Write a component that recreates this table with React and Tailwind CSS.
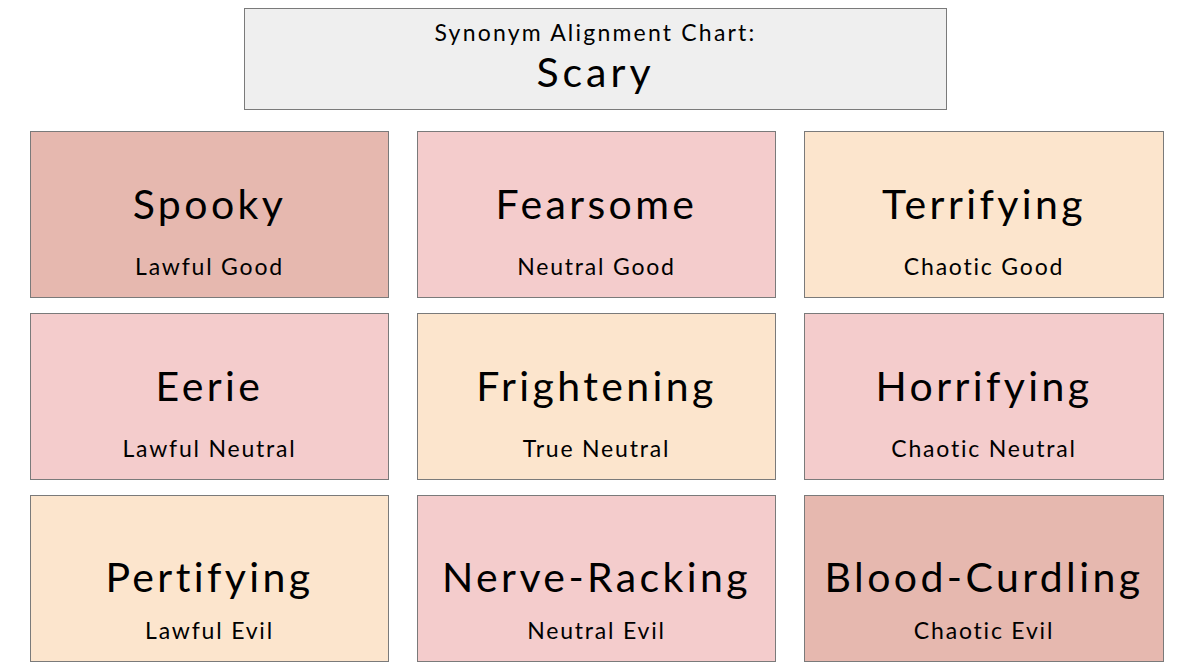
import React from 'react'

const cards = [
  { word: 'Spooky', label: 'Lawful Good', bg: 'bg-[#e6b8af]', row: 1 },
  { word: 'Fearsome', label: 'Neutral Good', bg: 'bg-[#f4cccc]', row: 1 },
  { word: 'Terrifying', label: 'Chaotic Good', bg: 'bg-[#fce5cd]', row: 1 },
  { word: 'Eerie', label: 'Lawful Neutral', bg: 'bg-[#f4cccc]', row: 2 },
  { word: 'Frightening', label: 'True Neutral', bg: 'bg-[#fce5cd]', row: 2 },
  { word: 'Horrifying', label: 'Chaotic Neutral', bg: 'bg-[#f4cccc]', row: 2 },
  { word: 'Pertifying', label: 'Lawful Evil', bg: 'bg-[#fce5cd]', row: 3 },
  { word: 'Nerve-Racking', label: 'Neutral Evil', bg: 'bg-[#f4cccc]', row: 3 },
  { word: 'Blood-Curdling', label: 'Chaotic Evil', bg: 'bg-[#e6b8af]', row: 3 },
]

const App = () => {
  return (
    <div className="w-[1191px] h-[671px] bg-white font-['Lato','Noto_Sans',sans-serif] text-black overflow-hidden">
      {/* header */}
      <div className="pt-2 flex justify-center">
        <div className="w-[703px] h-[102px] bg-[#efefef] border border-[#7a7a7a] flex flex-col items-center pt-[8px]">
          <p className="text-[23px] leading-[30px] tracking-[2.2px]">Synonym Alignment Chart:</p>
          <p className="text-[41px] leading-[50px] tracking-[4px]">Scary</p>
        </div>
      </div>

      {/* grid */}
      <div className="grid grid-cols-[359px_359px_360px] gap-x-[28px] gap-y-[15px] px-[30px] mt-[21px]">
        {cards.map((c) => (
          <div
            key={c.word}
            className={`${c.bg} h-[167px] border border-[#7a7a7a] flex flex-col items-center justify-end pb-[16px]`}
          >
            <p className={`text-[41px] leading-[50px] tracking-[3.4px] ${c.row === 3 ? 'mb-[13px]' : 'mb-[22px]'}`}>{c.word}</p>
            <p className="text-[23px] leading-[30px] tracking-[1.8px]">{c.label}</p>
          </div>
        ))}
      </div>
    </div>
  )
}

export default App
